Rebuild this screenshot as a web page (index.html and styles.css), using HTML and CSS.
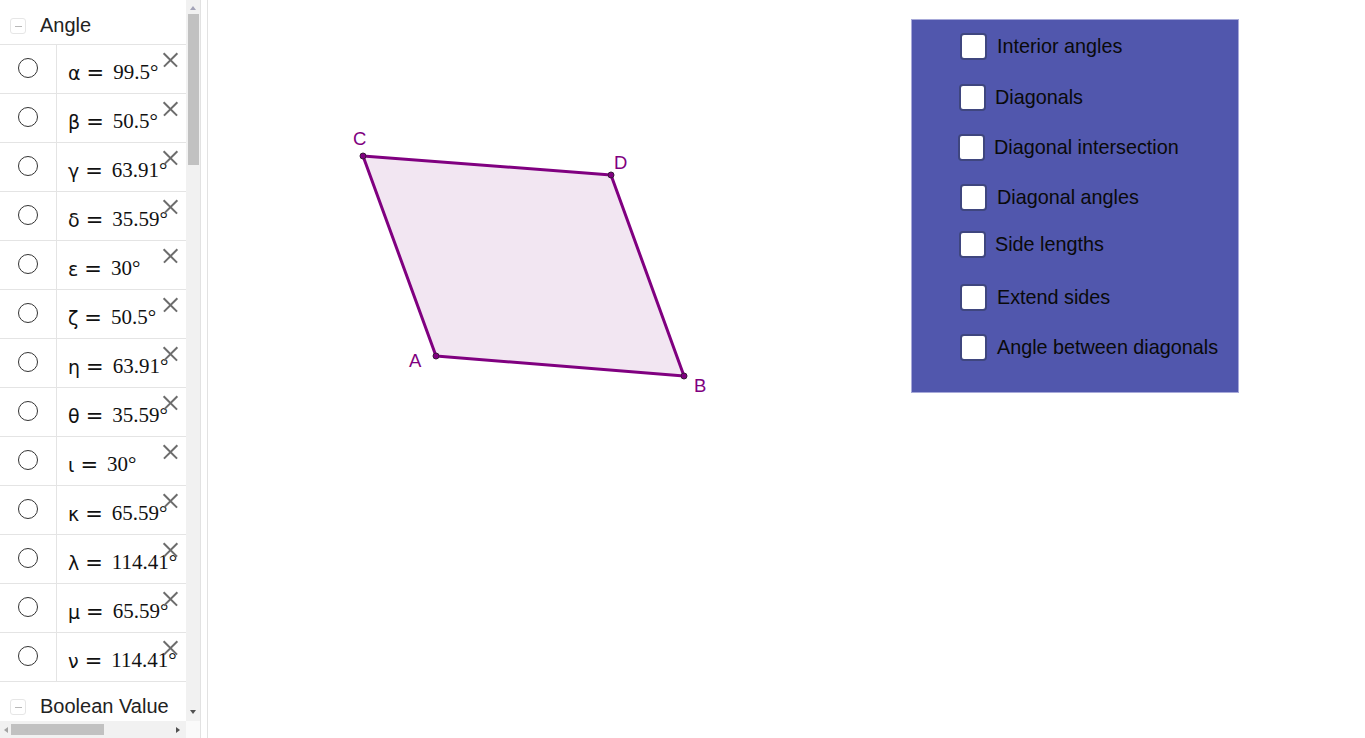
FILE: index.html
```html
<!DOCTYPE html>
<html>
<head>
<meta charset="utf-8">
<link rel="stylesheet" href="styles.css">
</head>
<body>
<div class="app">
  <div class="algebra">
    <div class="algebra-main">
      <div class="list">
        <div class="group-head group-head-angle">
          <span class="collapse"><span class="dash"></span></span>
          <span class="group-title">Angle</span>
        </div>
        <div class="row"><div class="radio-cell"><span class="radio"></span></div><div class="value-cell"><span class="sym">α</span><span class="eq">=</span><span class="num">99.5°</span><span class="close"></span></div></div>
        <div class="row"><div class="radio-cell"><span class="radio"></span></div><div class="value-cell"><span class="sym">β</span><span class="eq">=</span><span class="num">50.5°</span><span class="close"></span></div></div>
        <div class="row"><div class="radio-cell"><span class="radio"></span></div><div class="value-cell"><span class="sym">γ</span><span class="eq">=</span><span class="num">63.91°</span><span class="close"></span></div></div>
        <div class="row"><div class="radio-cell"><span class="radio"></span></div><div class="value-cell"><span class="sym">δ</span><span class="eq">=</span><span class="num">35.59°</span><span class="close"></span></div></div>
        <div class="row"><div class="radio-cell"><span class="radio"></span></div><div class="value-cell"><span class="sym">ε</span><span class="eq">=</span><span class="num">30°</span><span class="close"></span></div></div>
        <div class="row"><div class="radio-cell"><span class="radio"></span></div><div class="value-cell"><span class="sym">ζ</span><span class="eq">=</span><span class="num">50.5°</span><span class="close"></span></div></div>
        <div class="row"><div class="radio-cell"><span class="radio"></span></div><div class="value-cell"><span class="sym">η</span><span class="eq">=</span><span class="num">63.91°</span><span class="close"></span></div></div>
        <div class="row"><div class="radio-cell"><span class="radio"></span></div><div class="value-cell"><span class="sym">θ</span><span class="eq">=</span><span class="num">35.59°</span><span class="close"></span></div></div>
        <div class="row"><div class="radio-cell"><span class="radio"></span></div><div class="value-cell"><span class="sym">ι</span><span class="eq">=</span><span class="num">30°</span><span class="close"></span></div></div>
        <div class="row"><div class="radio-cell"><span class="radio"></span></div><div class="value-cell"><span class="sym">κ</span><span class="eq">=</span><span class="num">65.59°</span><span class="close"></span></div></div>
        <div class="row"><div class="radio-cell"><span class="radio"></span></div><div class="value-cell"><span class="sym">λ</span><span class="eq">=</span><span class="num">114.41°</span><span class="close"></span></div></div>
        <div class="row"><div class="radio-cell"><span class="radio"></span></div><div class="value-cell"><span class="sym">μ</span><span class="eq">=</span><span class="num">65.59°</span><span class="close"></span></div></div>
        <div class="row"><div class="radio-cell"><span class="radio"></span></div><div class="value-cell"><span class="sym">ν</span><span class="eq">=</span><span class="num">114.41°</span><span class="close"></span></div></div>
        <div class="group-head group-head-bool">
          <span class="collapse"><span class="dash"></span></span>
          <span class="group-title">Boolean Value</span>
        </div>
      </div>
      <div class="hscroll">
        <span class="arrow arrow-left"></span>
        <div class="htrack"><span class="hthumb"></span></div>
        <span class="arrow arrow-right"></span>
      </div>
    </div>
    <div class="vscroll">
      <span class="arrow arrow-up"></span>
      <div class="vtrack"><span class="vthumb"></span></div>
      <span class="arrow arrow-down"></span>
      <div class="corner"></div>
    </div>
  </div>
  <div class="divider"></div>
  <div class="graphics">
    <svg class="canvas" width="1157" height="738" viewBox="0 0 1157 738">
      <polygon points="228,356 476,376 403,175 155,156" fill="#f2e6f2" stroke="none"/>
      <g stroke="#800080" stroke-width="3" stroke-linecap="round">
        <line x1="228" y1="356" x2="476" y2="376"/>
        <line x1="476" y1="376" x2="403" y2="175"/>
        <line x1="403" y1="175" x2="155" y2="156"/>
        <line x1="155" y1="156" x2="228" y2="356"/>
      </g>
      <g fill="#800080" stroke="#3a1a3a" stroke-width="1">
        <circle cx="228" cy="356" r="3"/>
        <circle cx="476" cy="376" r="3"/>
        <circle cx="403" cy="175" r="3"/>
        <circle cx="155" cy="156" r="3"/>
      </g>
      <g fill="#800080" font-family="Liberation Sans, Arial, sans-serif" font-size="18.5">
        <text x="145" y="145">C</text>
        <text x="406" y="169">D</text>
        <text x="201" y="367">A</text>
        <text x="486" y="392">B</text>
      </g>
    </svg>
    <div class="check-panel">
      <label class="cb"><span class="box"></span><span class="cb-text">Interior angles</span></label>
      <label class="cb"><span class="box"></span><span class="cb-text">Diagonals</span></label>
      <label class="cb"><span class="box"></span><span class="cb-text">Diagonal intersection</span></label>
      <label class="cb"><span class="box"></span><span class="cb-text">Diagonal angles</span></label>
      <label class="cb"><span class="box"></span><span class="cb-text">Side lengths</span></label>
      <label class="cb"><span class="box"></span><span class="cb-text">Extend sides</span></label>
      <label class="cb"><span class="box"></span><span class="cb-text">Angle between diagonals</span></label>
    </div>
  </div>
</div>
</body>
</html>
```

FILE: styles.css
```css
* { box-sizing: border-box; }
html, body { margin: 0; padding: 0; background: #fff; }
body { font-family: "Liberation Sans", Arial, sans-serif; color: #222; overflow: hidden; }

.app { display: flex; width: 1365px; height: 738px; }

.algebra { display: flex; width: 200px; height: 738px; flex: none; }
.algebra-main { display: flex; flex-direction: column; width: 186px; height: 738px; }
.list { flex: 1; overflow: hidden; display: flex; flex-direction: column; }

.group-head {
  height: 45px; flex: none;
  display: flex; align-items: center;
  padding-left: 10px; padding-top: 3px;
  border-bottom: 1px solid #e4e4e4;
}
.group-head-angle { padding-top: 6px; }
.group-head-bool { border-bottom: none; height: 40px; padding-top: 8px; }
.collapse {
  width: 16px; height: 16px;
  border: 1px solid #e6e6e6; border-radius: 3px;
  display: flex; align-items: center; justify-content: center;
  margin-top: 2px;
}
.dash { width: 7px; height: 1px; background: #b8b8b8; }
.group-title { margin-left: 14px; font-size: 20px; color: #222; }

.row {
  height: 49px; flex: none;
  display: flex;
  border-bottom: 1px solid #e4e4e4;
}
.radio-cell {
  width: 57px; flex: none;
  border-right: 1px solid #e4e4e4;
  display: flex; align-items: center; justify-content: center;
  padding-right: 1px;
}
.radio {
  width: 20px; height: 20px; border-radius: 50%;
  border: 1px solid #333; background: #fff;
  margin-top: -2px;
}
.value-cell {
  flex: 1; position: relative; overflow: hidden;
  display: flex; align-items: center;
  padding-left: 11px; padding-top: 7px;
  white-space: nowrap;
}
.sym { font-family: "DejaVu Sans", sans-serif; font-size: 19px; color: #111; }
.eq { font-family: "DejaVu Sans", sans-serif; font-size: 21px; color: #111; margin-left: 6px; }
.num { font-family: "Liberation Serif", "Times New Roman", serif; font-size: 21px; color: #111; margin-left: 9px; }
.close {
  position: absolute; right: 8px; top: 7px;
  width: 15px; height: 15px;
}
.close::before, .close::after {
  content: ""; position: absolute; left: -2px; top: 7px;
  width: 19px; height: 1.5px; background: #6c6c6c;
}
.close::before { transform: rotate(45deg); }
.close::after { transform: rotate(-45deg); }

.hscroll {
  height: 17px; flex: none;
  background: #f1f1f1;
  display: flex; align-items: center;
}
.htrack { flex: 1; height: 100%; display: flex; align-items: center; padding: 0 2px; }
.hthumb { display: block; width: 93px; height: 11px; background: #c1c1c1; margin-left: 1px; }

.vscroll {
  width: 14px; height: 738px; flex: none;
  background: #f1f1f1;
  display: flex; flex-direction: column; align-items: center;
}
.vtrack { flex: 1; width: 100%; display: flex; flex-direction: column; align-items: center; padding-top: 2px; }
.vthumb { display: block; width: 11px; height: 151px; background: #c1c1c1; }
.corner { height: 17px; width: 100%; background: #fafafa; }

.arrow { display: block; width: 0; height: 0; flex: none; }
.arrow-up { border-left: 3.5px solid transparent; border-right: 3.5px solid transparent; border-bottom: 4px solid #a3a3b8; margin-top: 6px; margin-bottom: 2px; }
.arrow-down { border-left: 3.5px solid transparent; border-right: 3.5px solid transparent; border-top: 4px solid #505050; margin-bottom: 7px; }
.arrow-left { border-top: 3.5px solid transparent; border-bottom: 3.5px solid transparent; border-right: 4px solid #a3a3a3; margin-left: 4px; }
.arrow-right { border-top: 3.5px solid transparent; border-bottom: 3.5px solid transparent; border-left: 4px solid #505050; margin-right: 6px; }

.divider {
  width: 8px; height: 738px; flex: none;
  background: #fff;
  border-left: 1px solid #e2e2e2;
  border-right: 1px solid #e2e2e2;
}

.graphics { position: relative; flex: 1; height: 738px; overflow: hidden; }
.canvas { display: block; }

.check-panel {
  position: absolute; left: 703px; top: 19px;
  width: 328px; height: 374px;
  background: #5157ad;
  border: 1px solid #a7a9d9;
  display: flex; flex-direction: column;
  padding-top: 13px; padding-left: 47px;
}
.cb { display: flex; align-items: center; height: 26px; gap: 9px; }
.box {
  width: 27px; height: 27px; flex: none;
  background: #fff;
  border: 2px solid #3f467f;
  border-radius: 4px;
}
.cb-text { font-size: 19.8px; color: #0a0a0a; }
.cb:nth-child(1) { margin-left: 1px; }
.cb:nth-child(1) .cb-text { margin-left: 1px; }
.cb:nth-child(2) { margin-top: 25px; }
.cb:nth-child(3) { margin-top: 24px; margin-left: -1px; }
.cb:nth-child(4) { margin-top: 24px; margin-left: 1px; }
.cb:nth-child(4) .cb-text { margin-left: 1px; }
.cb:nth-child(5) { margin-top: 21px; }
.cb:nth-child(6) { margin-top: 27px; margin-left: 1px; }
.cb:nth-child(6) .cb-text { margin-left: 1px; }
.cb:nth-child(7) { margin-top: 24px; margin-left: 1px; }
.cb:nth-child(7) .cb-text { margin-left: 1px; }
```
